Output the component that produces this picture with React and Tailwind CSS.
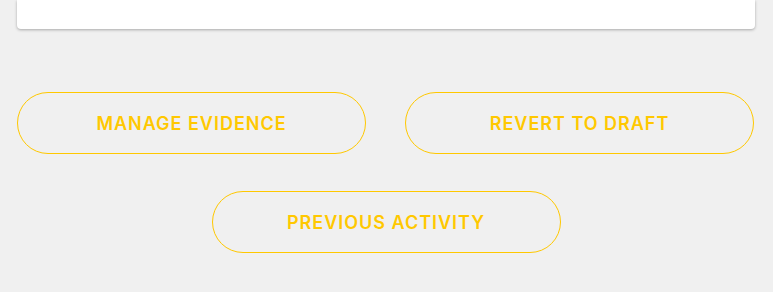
export default function App() {
  const btn =
    "h-[62px] w-[349px] rounded-full border border-[#ffc800] flex items-center justify-center text-[#ffc800] text-[18px] font-semibold tracking-[0.055em] bg-transparent";
  return (
    <div className="min-h-[292px] w-full bg-[#f0f0f0] px-[17px]" style={{ fontFamily: "Inter, 'Noto Sans', sans-serif" }}>
      <div className="h-[29px] w-[738px] bg-white rounded-b-[4px] shadow-[0_1px_3px_rgba(0,0,0,0.3)]" />
      <div className="mt-[63px] flex gap-[39px]">
        <button className={btn}>MANAGE EVIDENCE</button>
        <button className={btn}>REVERT TO DRAFT</button>
      </div>
      <div className="mt-[37px] flex justify-center w-[738px]">
        <button className={btn}>PREVIOUS ACTIVITY</button>
      </div>
    </div>
  );
}
